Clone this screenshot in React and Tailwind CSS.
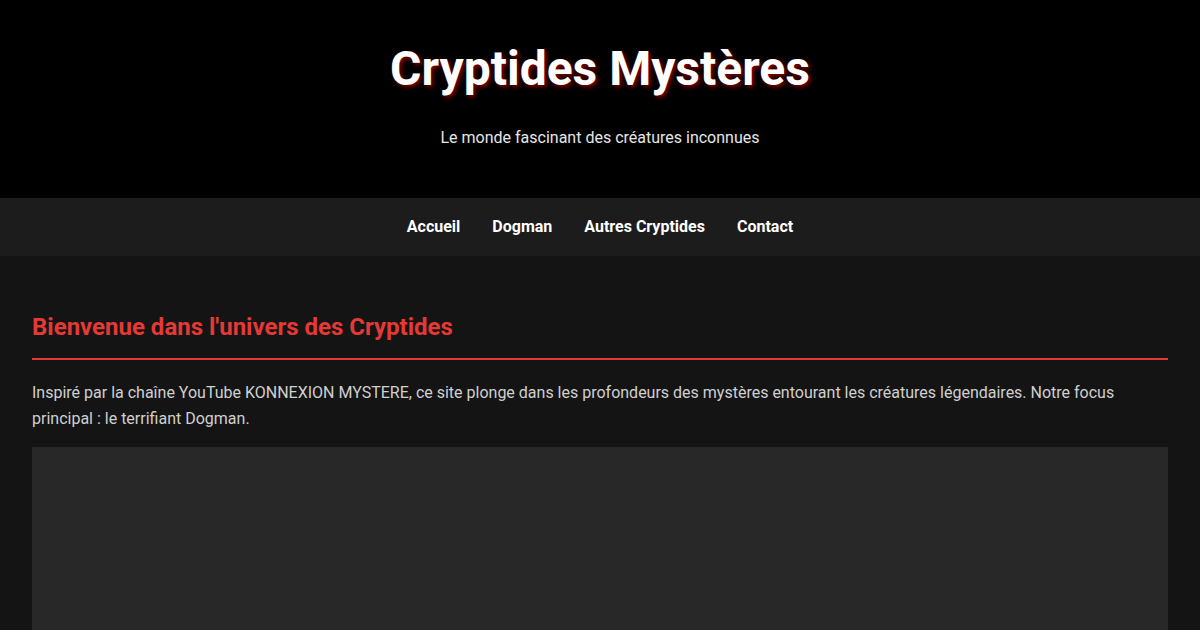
export default function App() {
  return (
    <div className="min-h-screen bg-[#141414] font-['Roboto','Liberation_Sans',sans-serif]">
      <header className="bg-black h-[198px] flex flex-col items-center pt-[40px]">
        <h1 className="text-5xl leading-[58px] font-bold text-white [text-shadow:2px_2px_4px_#8b0000]">
          Cryptides Mystères
        </h1>
        <p className="mt-[28px] text-base leading-6 text-[#e6e6e6]">
          Le monde fascinant des créatures inconnues
        </p>
      </header>

      <nav className="bg-[#1c1c1c] h-[58px] flex items-center justify-center gap-8">
        <a className="text-white font-bold text-base">Accueil</a>
        <a className="text-white font-bold text-base">Dogman</a>
        <a className="text-white font-bold text-base">Autres Cryptides</a>
        <a className="text-white font-bold text-base">Contact</a>
      </nav>

      <main className="px-8 pt-[57px]">
        <h2 className="text-2xl leading-[29px] font-bold text-[#e53935] pb-4 border-b-2 border-[#e53935]">
          Bienvenue dans l'univers des Cryptides
        </h2>
        <p className="mt-5 text-base leading-[1.6] text-[#d0d0d0]">
          Inspiré par la chaîne YouTube KONNEXION MYSTERE, ce site plonge dans les profondeurs des mystères entourant les créatures légendaires. Notre focus principal : le terrifiant Dogman.
        </p>
        <div className="mt-4 bg-[#282828] h-[300px]"></div>
      </main>
    </div>
  )
}
